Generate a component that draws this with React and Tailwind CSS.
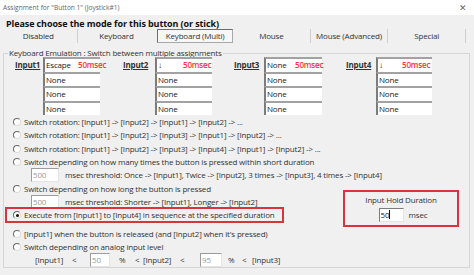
import React from "react";

const tabs = ["Disabled", "Keyboard", "Keyboard (Multi)", "Mouse", "Mouse (Advanced)", "Special"];

const inputs = [
  { name: "Input1", first: "Escape", col: "ml-[11px]", lab: "w-[28px]", box: "w-[57px]", msec: "left-[33px]" },
  { name: "Input2", first: "↓", col: "ml-[23px]", lab: "w-[32px]", box: "w-[57px]", msec: "left-[26px]" },
  { name: "Input3", first: "None", col: "ml-[22px]", lab: "w-[30px]", box: "w-[58px]", msec: "left-[29px]" },
  { name: "Input4", first: "↓", col: "ml-[24px]", lab: "w-[30px]", box: "w-[56px]", msec: "left-[24px]" },
];

const Radio = ({ checked }) => (
  <span className="w-[8px] h-[8px] ml-[9px] mr-[3px] shrink-0 rounded-full bg-white border border-t-[#6b6b6b] border-l-[#6b6b6b] border-b-[#dcdcdc] border-r-[#dcdcdc] flex items-center justify-center">
    {checked && <span className="w-[3px] h-[3px] rounded-full bg-[#111]" />}
  </span>
);

const Row = ({ children, className = "" }) => (
  <div className={"h-[13.3px] flex items-center whitespace-nowrap " + className}>{children}</div>
);

const Box = ({ value, className = "" }) => (
  <span
    className={
      "h-[14px] bg-white border border-t-[#9c9c9c] border-l-[#9c9c9c] border-b-[#e4e4e4] border-r-[#e4e4e4] flex items-center pl-[1px] text-[#9a9a9a] " +
      className
    }
  >
    {value}
  </span>
);

export default function App() {
  return (
    <div className="w-[474px] h-[275px] bg-[#f0f0f0] overflow-hidden font-['Open_Sans',sans-serif] text-[8px] tracking-[-0.17px] text-[#333]">
      <div className="h-[15px] bg-white flex items-center justify-between pl-[3px] pr-[7px]">
        <span className="text-[6.6px] tracking-normal text-[#666]">Assignment for "Button 1" (Joystick#1)</span>
        <span className="text-[9px] leading-none text-[#666]">✕</span>
      </div>

      <div className="h-[14px] pl-[6px] pt-[4px] text-[9px] leading-[10px] tracking-[-0.1px] font-bold text-[#111]">
        Please choose the mode for this button (or stick)
      </div>

      <div className="grid grid-cols-6 w-[466px] h-[14px]">
        {tabs.map((t, i) =>
          i === 2 ? (
            <div
              key={t}
              className="flex items-center justify-center ml-[2px] bg-[#f7f7f7] border border-[#a8a8a8] border-l-[#6e6e6e] border-t-[#6e6e6e]"
            >
              {t}
            </div>
          ) : (
            <div
              key={t}
              className={"flex items-center justify-center " + (i === 1 ? "" : "border-r border-[#cfcfcf]")}
            >
              {t}
            </div>
          )
        )}
      </div>

      <fieldset className="mt-[5px] ml-[3px] w-[467px] h-[220px] border border-[#d5d5d5]">
        <legend className="ml-[4px] px-[1px] text-[8px] leading-[10px]">
          Keyboard Emulation : Switch between multiple assignments
        </legend>

        <div className="flex -mt-[1px]">
          {inputs.map((c) => (
            <div key={c.name} className={"flex " + c.col}>
              <span className={"h-[15px] flex items-center font-bold underline " + c.lab}>{c.name}</span>
              <div className={c.box}>
                {[c.first, "None", "None", "None"].map((v, r) => (
                  <div
                    key={r}
                    className="relative h-[14.6px] bg-white border-t-2 border-l-2 border-t-[#a2a2a2] border-l-[#7c7c7c] flex items-center pl-[1px] text-[#222]"
                  >
                    {v}
                    {r === 0 && (
                      <span className={"absolute top-[0px] text-[#ff3030] font-semibold " + c.msec}>50msec</span>
                    )}
                  </div>
                ))}
              </div>
            </div>
          ))}
        </div>

        <Row>
          <Radio />
          Switch rotation: [Input1] -&gt; [Input2] -&gt; [Input1] -&gt; [Input2] -&gt; ...
        </Row>
        <Row>
          <Radio />
          Switch rotation: [Input1] -&gt; [Input2] -&gt; [Input3] -&gt; [Input1] -&gt; [Input2] -&gt; ...
        </Row>
        <Row>
          <Radio />
          Switch rotation: [Input1] -&gt; [Input2] -&gt; [Input3] -&gt; [Input4] -&gt; [Input1] -&gt; [Input2] -&gt; ...
        </Row>
        <Row>
          <Radio />
          Switch depending on how many times the button is pressed within short duration
        </Row>
        <Row>
          <Box value="500" className="ml-[27px] w-[28px]" />
          <span className="ml-[6px]">
            msec threshold: Once -&gt; [Input1], Twice -&gt; [Input2], 3 times -&gt; [Input3], 4 times -&gt; [Input4]
          </span>
        </Row>

        <div className="flex">
          <div className="flex-1">
            <Row>
              <Radio />
              Switch depending on how long the button is pressed
            </Row>
            <Row>
              <Box value="500" className="ml-[27px] w-[28px]" />
              <span className="ml-[6px]">msec threshold: Shorter -&gt; [Input1], Longer -&gt; [Input2]</span>
            </Row>
            <Row className="relative">
              <Radio checked />
              Execute from [Input1] to [Input4] in sequence at the specified duration
              <span className="absolute -top-[1.5px] -bottom-[1.5px] left-[1px] w-[279px] border-2 border-[#d8343c]" />
            </Row>
          </div>
          <div className="w-[116px] h-[37px] mt-[8px] mr-[10px] border-2 border-[#d8343c] flex flex-col items-center">
            <span className="mt-[3px] leading-[10px]">Input Hold Duration</span>
            <div className="flex items-center mt-[3px] ml-[4px]">
              <span className="w-[25px] h-[14px] bg-white border border-t-[#7c7c7c] border-l-[#7c7c7c] border-b-[#e4e4e4] border-r-[#e4e4e4] flex items-center pl-[1px] text-[#222]">
                50<span className="w-[1px] h-[9px] bg-[#111]" />
              </span>
              <span className="ml-[5px]">msec</span>
            </div>
          </div>
        </div>

        <Row>
          <Radio />
          [Input1] when the button is released (and [Input2] when it's pressed)
        </Row>
        <Row>
          <Radio />
          Switch depending on analog input level
        </Row>
        <Row>
          <span className="ml-[31px] w-[37px]">[Input1]</span>
          <span className="w-[18px]">&lt;</span>
          <Box value="50" className="w-[20px]" />
          <span className="ml-[9px] w-[16px]">%</span>
          <span className="w-[8px]">&lt;</span>
          <span className="w-[37px]">[Input2]</span>
          <span className="w-[20px]">&lt;</span>
          <Box value="95" className="w-[22px]" />
          <span className="ml-[6px] w-[14px]">%</span>
          <span className="w-[10px]">&lt;</span>
          <span>[Input3]</span>
        </Row>
      </fieldset>
    </div>
  );
}
